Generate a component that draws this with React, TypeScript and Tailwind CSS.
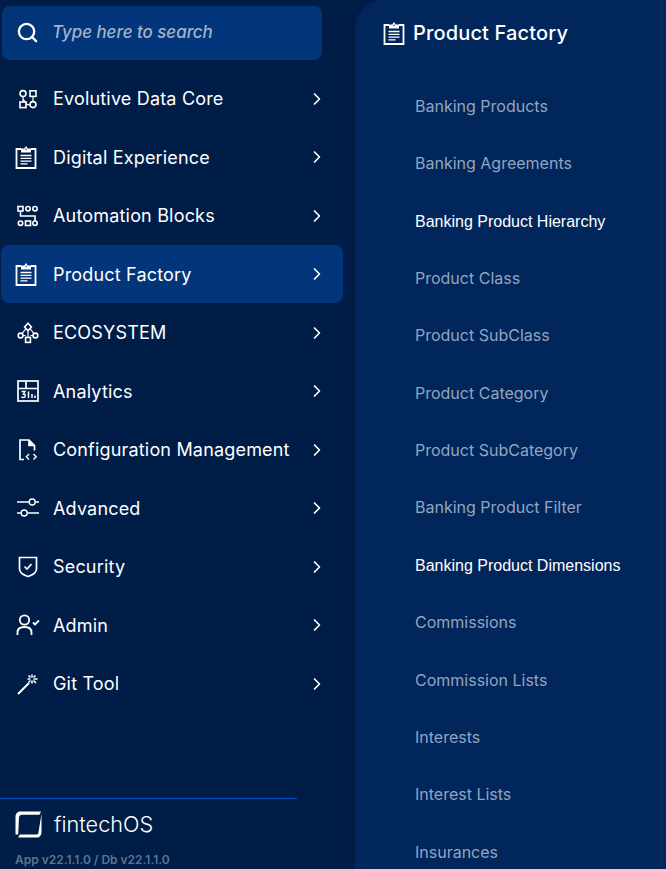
import { ChevronRight, Search } from 'lucide-react'
import type { ReactNode } from 'react'

const Clipboard = ({ className = 'h-[24px] w-[22px]' }: { className?: string }) => (
  <svg viewBox="0 0 22 24" fill="none" stroke="currentColor" strokeWidth="1.8" className={className}>
    <path d="M6 4H1.500v19h19V4H16" />
    <path fillRule="evenodd" d="M6 7.500V3.400h3.200L11 1l1.800 2.400H16v4.100zM11 3.200L10 4.800h2z" fill="currentColor" stroke="none" />
    <path d="M5.500 10.500h11M5.500 13.300h11M5.500 16.100h11M5.500 18.900h7" strokeWidth="1.300" />
  </svg>
)

const icons: Record<string, ReactNode> = {
  core: (
    <svg viewBox="0 0 20 20" fill="none" stroke="currentColor" strokeWidth="1.600" className="h-5 w-5">
      <circle cx="5" cy="4.600" r="3" />
      <rect x="12" y="1.800" width="6" height="5.600" />
      <rect x="2" y="13" width="6" height="5.600" />
      <circle cx="15" cy="15.600" r="3" />
      <path d="M5 7.600V13M15 7.400v5.200M8 15.600h4M5 10l4 5" strokeWidth="1.200" />
    </svg>
  ),
  blocks: (
    <svg viewBox="0 0 22 22" fill="none" stroke="currentColor" strokeWidth="1.600" className="h-[22px] w-[22px]">
      <rect x="1" y="1.500" width="5" height="4.500" />
      <circle cx="11" cy="3.700" r="2.200" />
      <circle cx="18" cy="3.700" r="2.200" />
      <circle cx="3.500" cy="18.200" r="2.200" />
      <rect x="8.500" y="16" width="5" height="4.500" />
      <circle cx="18" cy="18.200" r="2.200" />
      <path d="M3.500 6v5h14.500v5" />
    </svg>
  ),
  eco: (
    <svg viewBox="0 0 22 22" fill="none" stroke="currentColor" strokeWidth="1.600" className="h-[22px] w-[22px]">
      <path d="M11 1.200l3.400 3.800-3.400 3.800-3.400-3.800z" />
      <circle cx="3.600" cy="13.500" r="2.400" />
      <circle cx="18.400" cy="13.500" r="2.400" />
      <rect x="8.600" y="15.400" width="4.800" height="5" />
      <path d="M11 8.800v6.600M8.600 7L5 11.600M13.400 7l3.600 4.600M6 13.500h2.500M13.500 13.500H16" strokeWidth="1.200" />
    </svg>
  ),
  analytics: (
    <svg viewBox="0 0 22 22" fill="none" stroke="currentColor" strokeWidth="1.700" className="h-[22px] w-[22px]">
      <rect x="1" y="1" width="20" height="20" />
      <path d="M1 8.500h20M9 1v7.500" />
      <path d="M4.500 11.500h3.500l-1.700 2.500c1.500 0 2 .8 2 1.700 0 1-.8 1.800-2 1.800-.8 0-1.500-.3-2-.8" strokeWidth="1.300" />
      <path d="M11.500 11.500v6.500M15 14v4M18 15.500V18" strokeWidth="1.500" />
    </svg>
  ),
  config: (
    <svg viewBox="0 0 20 22" fill="none" stroke="currentColor" strokeWidth="1.700" className="h-[22px] w-5">
      <path d="M6 20.500H2V1h9l5.500 5.500v5" />
      <path d="M11 1v5.500h5.500" fill="currentColor" />
      <path d="M11 15l-2.700 2.700 2.700 2.700M15.500 15l2.700 2.700-2.700 2.700" strokeWidth="1.400" />
    </svg>
  ),
  advanced: (
    <svg viewBox="0 0 22 20" fill="none" stroke="currentColor" strokeWidth="1.400" className="h-5 w-[22px]">
      <path d="M0 4h12M18.400 4H22M0 15h4M10.400 15H22" />
      <circle cx="15.200" cy="4" r="3" />
      <circle cx="7.200" cy="15" r="3" />
    </svg>
  ),
  security: (
    <svg viewBox="0 0 20 22" fill="none" stroke="currentColor" strokeWidth="1.700" className="h-[22px] w-5">
      <path d="M1.500 1.500h17v11.500c0 3.500-4 6-8.500 7.500-4.500-1.500-8.500-4-8.500-7.500z" />
      <path d="M6.500 10.500l2.500 2.500 4.500-5" />
    </svg>
  ),
  admin: (
    <svg viewBox="0 0 24 22" fill="none" stroke="currentColor" strokeWidth="1.800" className="h-[22px] w-6">
      <circle cx="8.500" cy="6" r="4.700" />
      <path d="M1.500 21v-2.500c0-3.500 2.800-5.500 7-5.500s7 2 7 5.500V21" />
      <path d="M17 8.500l2 2 4-4" />
    </svg>
  ),
  git: (
    <svg viewBox="0 0 22 22" fill="none" stroke="currentColor" strokeWidth="1.600" className="h-[22px] w-[22px]">
      <path d="M1 21L12 10" strokeWidth="2" />
      <path d="M15 1.500v3M15 7.500v3M10.500 6h3M16.500 6h4M11.500 2.500l2 2M16.500 7.500l2.500 2.500M18.500 2.500l-2 2M13.500 7.500l-2 2" />
    </svg>
  ),
}

const menu = [
  { label: 'Evolutive Data Core', icon: icons.core },
  { label: 'Digital Experience', icon: <Clipboard className="mr-[5px] h-[24px] w-[22px]" /> },
  { label: 'Automation Blocks', icon: icons.blocks },
  { label: 'Product Factory', icon: <Clipboard className="mr-[5px] h-[24px] w-[22px]" />, active: true },
  { label: 'ECOSYSTEM', icon: icons.eco },
  { label: 'Analytics', icon: icons.analytics },
  { label: 'Configuration Management', icon: icons.config },
  { label: 'Advanced', icon: icons.advanced },
  { label: 'Security', icon: icons.security },
  { label: 'Admin', icon: icons.admin },
  { label: 'Git Tool', icon: icons.git },
]

const subItems = [
  { label: 'Banking Products' },
  { label: 'Banking Agreements' },
  { label: 'Banking Product Hierarchy', white: true },
  { label: 'Product Class' },
  { label: 'Product SubClass' },
  { label: 'Product Category' },
  { label: 'Product SubCategory' },
  { label: 'Banking Product Filter' },
  { label: 'Banking Product Dimensions', white: true },
  { label: 'Commissions' },
  { label: 'Commission Lists' },
  { label: 'Interests' },
  { label: 'Interest Lists' },
  { label: 'Insurances' },
]

export default function App() {
  return (
    <div className="flex h-[869px] w-[666px] overflow-hidden bg-[#001d48] font-['Inter',sans-serif] text-white">
      <aside className="flex h-full w-[355px] shrink-0 flex-col">
        <div className="ml-[2px] mt-[6px] flex h-[54px] w-[320px] items-center rounded-lg bg-[#03357a] pl-[14px]">
          <Search className="mb-[2px] h-[23px] w-[23px]" strokeWidth={2.400} />
          <span className="mb-[1px] ml-[13px] text-[16.900px] font-medium italic text-[#a3b3cb]">Type here to search</span>
        </div>
        <nav className="mt-[9.250px] flex w-[343px] flex-col pl-px">
          {menu.map((m) => (
            <div
              key={m.label}
              className={`flex h-[58.500px] items-center rounded-lg ${m.active ? 'bg-[#03357a]' : ''}`}
            >
              <span className="flex w-[52px] shrink-0 justify-center pl-[2px]">{m.icon}</span>
              <span className="flex-1 whitespace-nowrap text-[18px] tracking-[0.18px]">{m.label}</span>
              <ChevronRight className="mr-[16px] h-[20px] w-[20px]" strokeWidth={2} />
            </div>
          ))}
        </nav>
        <div className="mt-auto">
          <div className="h-px w-[297px] bg-[#0a50ba]" />
          <div className="mt-[12px] flex items-center pl-[15px]">
            <svg viewBox="0 0 27 27" className="h-[27px] w-[27px]" fill="currentColor">
              <path d="M.5 23.500V6C.5 2.500 2.500.5 6 .5h20L24.500 3.800H7c-1.800 0-2.800 1-3 2.800L3.200 23.500z" />
              <path d="M26.500 2.500V21c0 3.500-1.800 5.500-5 5.500H3L5 23.500h16c1.500 0 2.400-.7 2.500-2.300z" />
            </svg>
            <span className="ml-[12px] text-[21.700px] font-light leading-none">fintechOS</span>
          </div>
          <div className="mb-[1px] mt-[14px] pl-[15px] text-xs font-semibold text-[#5f7391]">App v22.1.1.0 / Db v22.1.1.0</div>
        </div>
      </aside>
      <main className="h-[900px] flex-1 rounded-tl-[28px] bg-[#00265c] pl-[28px] shadow-[-4px_0_10px_rgba(0,0,0,0.08)]">
        <div className="flex h-[66px] items-center">
          <Clipboard />
          <span className="ml-[8px] text-[20px] font-medium tracking-[0.15px]">Product Factory</span>
        </div>
        <ul className="pl-[32px] pt-[11px]">
          {subItems.map((s) => (
            <li
              key={s.label}
              className={`flex h-[57.400px] items-center whitespace-nowrap text-base ${
                s.white ? "pt-[3px] font-['Liberation_Sans',sans-serif] text-white" : 'text-[#93a4bf]'
              }`}
            >
              {s.label}
            </li>
          ))}
        </ul>
      </main>
    </div>
  )
}
